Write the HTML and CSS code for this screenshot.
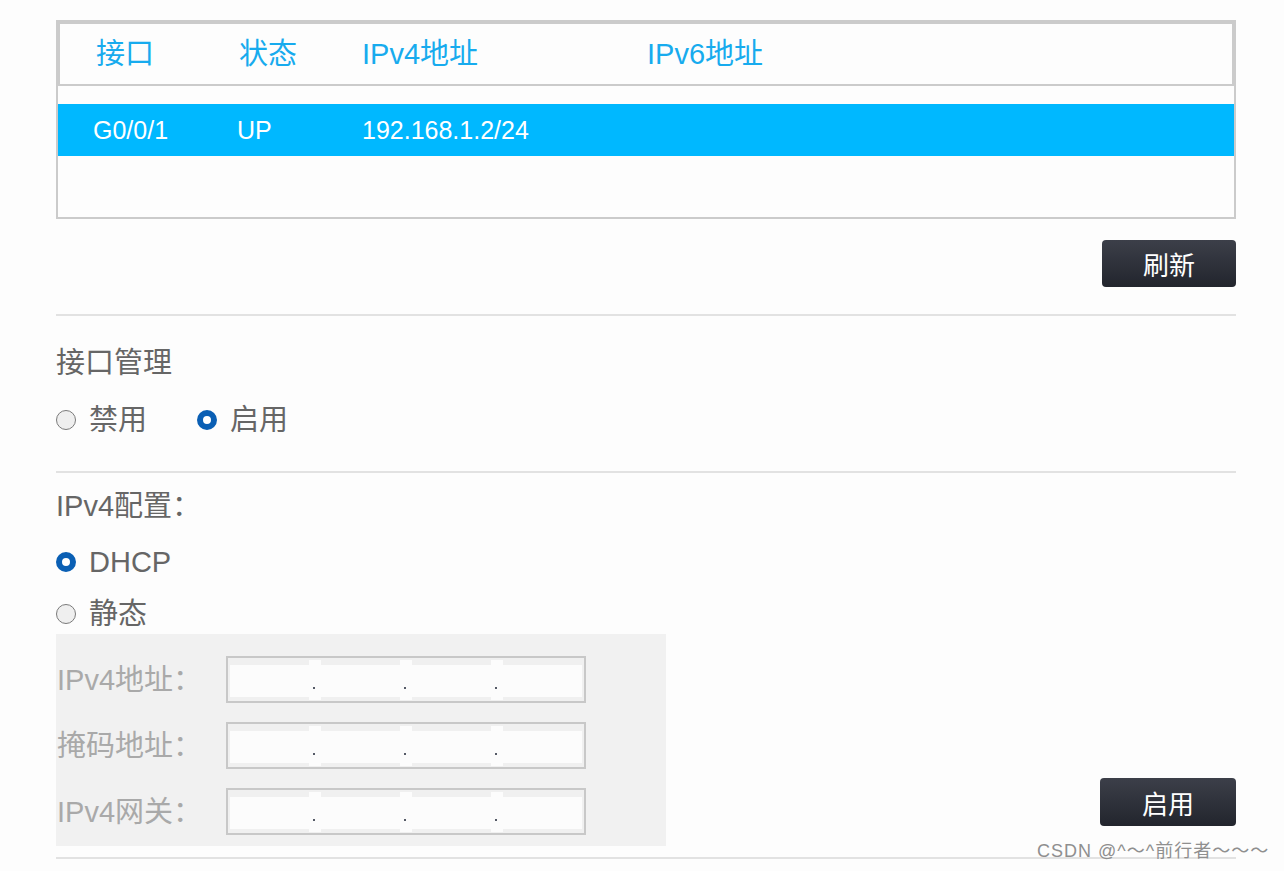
FILE: index.html
```html
<!DOCTYPE html>
<html lang="zh-CN">
<head>
<meta charset="utf-8">
<title>接口配置</title>
<link rel="stylesheet" href="styles.css">
</head>
<body>
<div class="page">
  <div class="table">
    <div class="thead">
      <div class="th c1">接口</div>
      <div class="th c2">状态</div>
      <div class="th c3">IPv4地址</div>
      <div class="th c4">IPv6地址</div>
    </div>
    <div class="tbody">
      <div class="tr selected">
        <div class="td c1">G0/0/1</div>
        <div class="td c2">UP</div>
        <div class="td c3">192.168.1.2/24</div>
        <div class="td c4"></div>
      </div>
    </div>
  </div>

  <div class="toolbar">
    <button class="btn btn-refresh">刷新</button>
  </div>

  <div class="sep sep-first"></div>

  <section class="mgmt">
    <div class="title">接口管理</div>
    <div class="radios">
      <label class="radio"><span class="dot"></span><span class="rtext">禁用</span></label>
      <label class="radio checked"><span class="dot"></span><span class="rtext">启用</span></label>
    </div>
  </section>

  <div class="sep"></div>

  <section class="ipv4">
    <div class="title title-ipv4">IPv4配置：</div>
    <label class="radio checked row-dhcp"><span class="dot"></span><span class="rtext">DHCP</span></label>
    <label class="radio row-static"><span class="dot"></span><span class="rtext">静态</span></label>
    <div class="bottom">
      <div class="static-box">
        <div class="field">
          <span class="flabel">IPv4地址：</span>
          <div class="ipbox"><span class="seg"></span><span class="tab"><i></i></span><span class="seg"></span><span class="tab"><i></i></span><span class="seg"></span><span class="tab"><i></i></span><span class="seg"></span></div>
        </div>
        <div class="field">
          <span class="flabel">掩码地址：</span>
          <div class="ipbox"><span class="seg"></span><span class="tab"><i></i></span><span class="seg"></span><span class="tab"><i></i></span><span class="seg"></span><span class="tab"><i></i></span><span class="seg"></span></div>
        </div>
        <div class="field">
          <span class="flabel">IPv4网关：</span>
          <div class="ipbox"><span class="seg"></span><span class="tab"><i></i></span><span class="seg"></span><span class="tab"><i></i></span><span class="seg"></span><span class="tab"><i></i></span><span class="seg"></span></div>
        </div>
      </div>
      <button class="btn btn-enable">启用</button>
    </div>
  </section>

  <div class="sep sep-last"></div>

  <div class="watermark">CSDN @^～^前行者～～～</div>
</div>
</body>
</html>
```

FILE: styles.css
```css
* { box-sizing: border-box; }
html, body {
  margin: 0;
  padding: 0;
  background: #fdfdfd;
}
body {
  font-family: "Liberation Sans", Arial, "Noto Sans CJK SC", sans-serif;
  color: #666;
}
.page {
  position: relative;
  width: 1284px;
  height: 871px;
  padding: 20px 48px 0 56px;
}

/* table */
.table {
  width: 1180px;
  height: 199px;
  border: 2px solid #cbcbcb;
  background: #fdfdfd;
}
.thead {
  display: grid;
  grid-template-columns: 143px 123px 285px 1fr;
  align-items: center;
  height: 64px;
  border: 2px solid #cbcbcb;
  padding-left: 36px;
}
.th {
  font-size: 29px;
  color: #17abee;
  line-height: 40px;
}
.tbody {
  padding-top: 18px;
}
.tr {
  display: grid;
  grid-template-columns: 144px 125px 285px 1fr;
  align-items: center;
  height: 52px;
  padding-left: 35px;
}
.tr.selected {
  background: #00b8ff;
}
.td {
  font-size: 25px;
  color: #fff;
  line-height: 30px;
}

/* buttons */
.toolbar {
  display: flex;
  justify-content: flex-end;
  width: 1180px;
  margin-top: 21px;
}
.btn {
  border: none;
  border-radius: 4px;
  background: linear-gradient(#3c3f49, #22252d);
  color: #fff;
  font-family: "Noto Sans CJK SC", sans-serif;
  font-size: 26px;
  padding: 0;
}
.btn-refresh {
  width: 134px;
  height: 47px;
}
.btn-enable {
  width: 136px;
  height: 48px;
  margin-bottom: 20px;
}

/* separators */
.sep {
  width: 1180px;
  height: 2px;
  background: #e2e2e2;
}
.sep-first { margin-top: 27px; }
.sep-last { margin-top: 11px; }

/* sections */
.title {
  font-size: 29px;
  line-height: 40px;
  color: #666;
}
.mgmt {
  padding-top: 27px;
  padding-bottom: 31px;
  height: 155px;
}
.radios {
  display: flex;
  gap: 50px;
  margin-top: 17px;
}
.radio {
  display: flex;
  align-items: center;
  height: 40px;
}
.dot {
  width: 20px;
  height: 20px;
  border-radius: 50%;
  border: 1px solid #7a7a7a;
  background: #efefef;
  flex: none;
}
.radio.checked .dot {
  border: 6px solid #0a5fb4;
  background: #fff;
}
.rtext {
  margin-left: 13px;
  font-size: 29px;
  line-height: 40px;
  color: #666;
}

.ipv4 {
  padding-top: 13px;
}
.row-dhcp { margin-top: 16px; }
.row-static { margin-top: 13px; height: 38px; }

.bottom {
  display: flex;
  justify-content: space-between;
  align-items: flex-end;
  width: 1180px;
  margin-top: 1px;
}
.static-box {
  width: 610px;
  height: 212px;
  background: #f1f1f1;
  padding-top: 22px;
  display: flex;
  flex-direction: column;
  gap: 19px;
}
.field {
  display: flex;
  align-items: center;
  height: 47px;
}
.flabel {
  width: 170px;
  padding-left: 1px;
  font-size: 29px;
  color: #a9a9a9;
  line-height: 40px;
}
.ipbox {
  display: flex;
  align-items: center;
  width: 360px;
  height: 47px;
  border: 2px solid #c8c8c8;
  padding: 0 2px;
  background: #f0f0f0;
}
.seg {
  flex: 1;
  height: 32px;
  margin-top: 2px;
  background: #fcfcfc;
}
.tab {
  position: relative;
  width: 12px;
  height: 40px;
  background: #fcfcfc;
}
.tab i {
  position: absolute;
  left: 4px;
  top: 27px;
  width: 2px;
  height: 2px;
  background: #555a66;
}

/* watermark */
.watermark {
  position: absolute;
  left: 1037px;
  top: 839px;
  font-size: 18px;
  line-height: 24px;
  letter-spacing: 1px;
  color: #8f8f8f;
  white-space: nowrap;
}
```
